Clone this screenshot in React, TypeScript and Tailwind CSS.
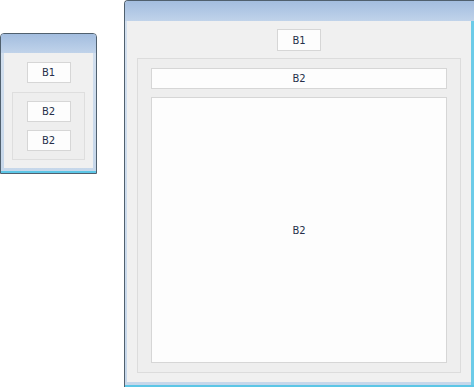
import React from 'react';

const Btn: React.FC<{ label: string; className?: string }> = ({ label, className = '' }) => (
  <div
    className={`flex items-center justify-center bg-[#fdfdfd] border border-[#d6d6d6] text-[10px] text-[#26304a] ${className}`}
  >
    {label}
  </div>
);

export default function App() {
  return (
    <div
      className="w-[474px] h-[387px] bg-white flex items-start overflow-hidden"
      style={{ fontFamily: '"DejaVu Sans", Tahoma, sans-serif' }}
    >
      {/* small window */}
      <div className="mt-[33px] w-[97px] h-[141px] flex flex-col border border-[#50606e] rounded-t-[4px] bg-gradient-to-b from-[#d3e0ef] to-[#c6d7ea]">
        <div className="h-[19px] shrink-0 rounded-t-[3px] bg-gradient-to-b from-[#a3bddf] to-[#c0d3ea]" />
        <div className="flex-1 flex flex-col px-[3px] pb-[3px]">
          <div className="flex-1 bg-[#f0f0f0] flex flex-col items-center pt-[9px]">
            <Btn label="B1" className="w-[44px] h-[21px]" />
            <div className="mt-[9px] w-[73px] h-[68px] border border-[#dedede] bg-[#eeeeee] flex flex-col items-center pt-[8px] gap-[8px]">
              <Btn label="B2" className="w-[44px] h-[21px]" />
              <Btn label="B2" className="w-[44px] h-[21px]" />
            </div>
          </div>
        </div>
        <div className="h-[2px] shrink-0 bg-[#5cc6e6]" />
      </div>

      {/* big window */}
      <div className="ml-[27px] w-[350px] h-[387px] flex flex-col border-l border-t border-[#50606e] rounded-tl-[4px] bg-gradient-to-b from-[#d3e0ef] to-[#c6d7ea]">
        <div className="h-[20px] shrink-0 rounded-tl-[3px] bg-gradient-to-b from-[#a3bddf] to-[#c0d3ea]" />
        <div className="flex-1 flex">
          <div className="flex-1 flex flex-col pl-[2px] pb-[3px]">
            <div className="flex-1 bg-[#f0f0f0] flex flex-col items-center pt-[8px] pb-[9px]">
              <Btn label="B1" className="w-[44px] h-[22px] shrink-0" />
              <div className="mt-[7px] self-stretch ml-[10px] mr-[10px] flex-1 border border-[#dcdcdc] bg-[#eeeeee] flex flex-col px-[13px] pt-[9px] pb-[9px] gap-[8px]">
                <Btn label="B2" className="h-[21px] shrink-0" />
                <Btn label="B2" className="flex-1 bg-[#fbfbfb]" />
              </div>
            </div>
          </div>
          <div className="w-[3px] shrink-0 bg-[#6ccbe8]" />
        </div>
        <div className="h-[2px] shrink-0 bg-[#5cc6e6]" />
      </div>
    </div>
  );
}
